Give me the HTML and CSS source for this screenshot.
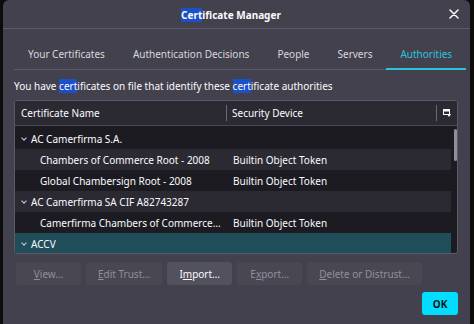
FILE: index.html
```html
<!DOCTYPE html>
<html lang="en">
<head>
  <meta charset="UTF-8">
  <title>Certificate Manager</title>
  <link rel="stylesheet" href="styles.css">
</head>
<body>

  <div class="dialog">
    <header class="titlebar">
      <h1><mark>Cert</mark>ificate Manager</h1>
      <span class="close">
        <svg width="10" height="10" viewBox="0 0 10 10"><path d="M1 1 L9 9 M9 1 L1 9" stroke="#fbfbfe" stroke-width="1.5" stroke-linecap="round"/></svg>
      </span>
    </header>

    <nav class="tabs">
      <span class="tab">Your Certificates</span>
      <span class="tab">Authentication Decisions</span>
      <span class="tab">People</span>
      <span class="tab">Servers</span>
      <span class="tab active">Authorities</span>
    </nav>

    <main class="content">
      <p class="intro">You have <mark>cert</mark>ificates on file that identify these <mark>cert</mark>ificate authorities</p>

      <div class="tree">
        <div class="tree-head">
          <span class="col-name">Certificate Name</span>
          <span class="col-device">Security Device</span>
          <span class="picker">
            <svg width="8" height="8" viewBox="0 0 8 8"><rect x="0.5" y="0.5" width="6" height="5" fill="none" stroke="#fbfbfe" stroke-width="1"/><rect x="1" y="1" width="5" height="1.5" fill="#fbfbfe"/><path d="M4 5 L8 5 L6 8 Z" fill="#fbfbfe"/></svg>
          </span>
        </div>
        <div class="tree-body">
          <div class="row group"><span class="col-name"><i class="twisty"></i>AC Camerfirma S.A.</span><span class="col-device"></span></div>
          <div class="row"><span class="col-name child">Chambers of Commerce Root - 2008</span><span class="col-device">Builtin Object Token</span></div>
          <div class="row"><span class="col-name child">Global Chambersign Root - 2008</span><span class="col-device">Builtin Object Token</span></div>
          <div class="row group"><span class="col-name"><i class="twisty"></i>AC Camerfirma SA CIF A82743287</span><span class="col-device"></span></div>
          <div class="row"><span class="col-name child">Camerfirma Chambers of Commerce Root</span><span class="col-device">Builtin Object Token</span></div>
          <div class="row group selected"><span class="col-name"><i class="twisty"></i>ACCV</span><span class="col-device"></span></div>
          <span class="scroll-thumb"></span>
        </div>
      </div>

      <div class="actions">
        <button disabled><u>V</u>iew…</button>
        <button disabled><u>E</u>dit Trust…</button>
        <button>I<u>m</u>port…</button>
        <button disabled>E<u>x</u>port…</button>
        <button disabled><u>D</u>elete or Distrust…</button>
      </div>

      <div class="footer">
        <button class="ok">OK</button>
      </div>
    </main>
  </div>

</body>
</html>
```

FILE: styles.css
```css
* {
  margin: 0;
  padding: 0;
  box-sizing: border-box;
  font-family: 'Noto Sans', sans-serif;
}

body {
  background: #0c0c0d;
  color: #fbfbfe;
  width: 474px;
  height: 324px;
  overflow: hidden;
  font-size: 10px;
}

mark {
  background: #1b50c8;
  color: #fbfbfe;
}

.dialog {
  margin-left: 3px;
  width: 467px;
  height: 324px;
  background: #42414d;
  border-radius: 6px 6px 0 0;
  display: flex;
  flex-direction: column;
}

.titlebar {
  height: 29px;
  padding: 0 11px 0 0;
  border-bottom: 1px solid #5b5a66;
  display: flex;
  align-items: center;
}

.titlebar h1 {
  flex: 1;
  text-align: center;
  padding-left: 10px;
  padding-top: 1px;
  font-size: 10px;
  font-weight: bold;
}

.close {
  display: flex;
}

.tabs {
  display: flex;
  margin: 11px 7px 0 11px;
  height: 30px;
  border-bottom: 1px solid #5b5a66;
}

.tab {
  padding: 0 14px;
  color: #d7d7de;
  display: flex;
  align-items: center;
  white-space: nowrap;
  border-bottom: 2px solid transparent;
  margin-bottom: -1px;
}

.tab.active {
  color: #2ac3de;
  border-bottom-color: #2ac3de;
}

.content {
  padding: 9px 12px 0 11px;
  flex: 1;
  display: flex;
  flex-direction: column;
}

.intro {
  height: 21px;
  line-height: 14px;
}

.tree {
  width: 444px;
  height: 154px;
  border: 1px solid #5b5a66;
  border-radius: 3px;
  background: #1c1b22;
  overflow: hidden;
}

.tree-head {
  height: 25px;
  background: #2b2a33;
  border-bottom: 1px solid #4a4955;
  display: flex;
  align-items: center;
}

.tree-head .col-name {
  border-right: 1px solid #6c6b75;
  padding-left: 6px;
  height: 16px;
  line-height: 16px;
}

.tree-head .col-device {
  flex: 1;
  padding-left: 5px;
  border-right: 1px solid #6c6b75;
  height: 16px;
  line-height: 16px;
}

.picker {
  width: 20px;
  display: flex;
  justify-content: center;
}

.col-name {
  width: 212px;
  white-space: nowrap;
  overflow: hidden;
  text-overflow: ellipsis;
}

.col-device {
  flex: 1;
  padding-left: 6px;
  white-space: nowrap;
}

.tree-body {
  position: relative;
  padding-top: 2px;
}

.row {
  height: 21px;
  display: flex;
  align-items: center;
  margin-right: 6px;
}

.row:nth-child(even) {
  background: #2b2a33;
}

.row .col-name {
  padding-left: 5px;
  display: flex;
  align-items: center;
}

.row .col-name.child {
  display: block;
  padding-left: 25px;
  padding-right: 6px;
}

.twisty {
  width: 4px;
  height: 4px;
  border-right: 1px solid #cfcfd8;
  border-bottom: 1px solid #cfcfd8;
  transform: rotate(45deg);
  margin: -1px 5px 0 2px;
}

.row.selected {
  background: #1f4e5a;
}

.scroll-thumb {
  position: absolute;
  right: 0;
  top: 3px;
  width: 3px;
  height: 32px;
  background: #8f8f9d;
  border-radius: 2px;
}

.actions {
  display: flex;
  gap: 5px;
  margin-top: 8px;
  padding-left: 2px;
}

button {
  height: 23px;
  min-width: 65px;
  padding: 0 12px;
  border: none;
  border-radius: 3px;
  background: #52515e;
  color: #fbfbfe;
  font-size: 10px;
  white-space: nowrap;
}

button:disabled {
  background: #494852;
  color: #8f8f9d;
}

.footer {
  display: flex;
  justify-content: flex-end;
  margin-top: 7px;
}

.ok {
  width: 36px;
  min-width: 0;
  padding: 0;
  background: #00ddff;
  color: #15141a;
  font-weight: bold;
}
```
